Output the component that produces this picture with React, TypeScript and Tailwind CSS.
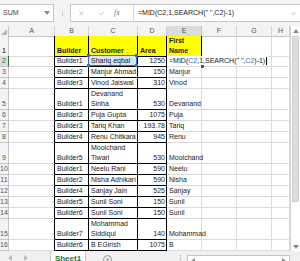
import { Check, ChevronDown, X } from "lucide-react";

type SheetRow = {
  n: number;
  tall?: boolean;
  b: string;
  c: string[];
  d: string;
  e: string;
};

const ROWS: SheetRow[] = [
  { n: 2, b: "Builder1", c: ["Shariq eqbal"], d: "1250", e: "" },
  { n: 3, b: "Builder2", c: ["Manjur Ahmad"], d: "150", e: "Manjur" },
  { n: 4, b: "Builder3", c: ["Vinod Jaiswal"], d: "310", e: "Vinod" },
  { n: 5, tall: true, b: "Builder1", c: ["Devanand", "Sinha"], d: "530", e: "Devanand" },
  { n: 6, b: "Builder2", c: ["Puja Gupta"], d: "1075", e: "Puja" },
  { n: 7, b: "Builder3", c: ["Tariq Khan"], d: "193.78", e: "Tariq" },
  { n: 8, b: "Builder4", c: ["Renu Chitkara"], d: "945", e: "Renu" },
  { n: 9, tall: true, b: "Builder5", c: ["Moolchand", "Tiwari"], d: "530", e: "Moolchand" },
  { n: 10, b: "Builder1", c: ["Neelu Rani"], d: "590", e: "Neelu" },
  { n: 11, b: "Builder2", c: ["Nisha Adhikari"], d: "590", e: "Nisha" },
  { n: 12, b: "Builder4", c: ["Sanjay Jain"], d: "525", e: "Sanjay" },
  { n: 13, b: "Builder5", c: ["Sunil Soni"], d: "150", e: "Sunil" },
  { n: 14, b: "Builder6", c: ["Sunil Soni"], d: "150", e: "Sunil" },
  { n: 15, tall: true, b: "Builder7", c: ["Mohammad", "Siddiqui"], d: "140", e: "Mohammad" },
  { n: 16, b: "Builder6", c: ["B EGirish"], d: "1075", e: "B" },
];

const COLS =
  "grid grid-cols-[9px_46px_34px_49px_29px_35px_35px_35px_18px]";
const LETTERS = ["A", "B", "C", "D", "E", "F", "G", "H"];

function Tri({ dir }: { readonly dir: "up" | "down" | "left" | "right" }) {
  const pts = {
    up: "0,4 3,0 6,4",
    down: "0,0 6,0 3,4",
    left: "4,0 4,6 0,3",
    right: "0,0 4,3 0,6",
  }[dir];
  const w = dir === "up" || dir === "down" ? 6 : 4;
  const h = dir === "up" || dir === "down" ? 4 : 6;
  return (
    <svg width={w} height={h} viewBox={`0 0 ${w} ${h}`}>
      <polygon points={pts} fill="#8a8a8a" />
    </svg>
  );
}

function FormulaBar() {
  return (
    <div className="h-[26px] bg-[#f3f3f3] flex items-start pt-[4px]">
      {/* Name box */}
      <div className="w-[54px] h-[18px] bg-white border border-l-0 border-[#c6c6c6] flex items-center justify-between pl-[3px] pr-[3px] text-[#444]">
        <span>SUM</span>
        <Tri dir="down" />
      </div>
      <div className="w-[16px] h-[18px] flex flex-col items-center justify-center gap-[1px]">
        <span className="w-[1px] h-[1px] bg-[#b0b0b0]" />
        <span className="w-[1px] h-[1px] bg-[#b0b0b0]" />
        <span className="w-[1px] h-[1px] bg-[#b0b0b0]" />
      </div>
      <div className="flex-1 h-[18px] bg-white border border-r-0 border-[#c6c6c6] flex items-center">
        <div className="w-[63px] h-full flex items-center border-r border-[#d6d6d6] text-[#7a7a7a]">
          <X size={7} strokeWidth={1.5} className="ml-[7px]" />
          <Check size={7} strokeWidth={1.5} className="ml-[13px]" />
          <span className="ml-[9px] font-['Liberation_Serif',serif] italic text-[8px]">
            fx
          </span>
        </div>
        <span className="ml-[4px] flex-1 whitespace-nowrap">
          =MID(C2,1,SEARCH(" ",C2)-1)
        </span>
        <ChevronDown size={7} strokeWidth={1.5} className="mr-[3px] text-[#666]" />
      </div>
    </div>
  );
}

function HeaderRow() {
  return (
    <div className={`${COLS} h-[10px]`}>
      <div className="bg-[#f3f3f3] border-r border-b border-[#c6c6c6] flex items-end justify-end pr-[1px] pb-[1px]">
        <svg width="6" height="6" viewBox="0 0 6 6">
          <polygon points="6,0 6,6 0,6" fill="#b7b7b7" />
        </svg>
      </div>
      {LETTERS.map((l) => {
        const boxed = l === "B" || l === "C" || l === "D";
        const active = l === "E";
        let cls =
          "bg-[#f3f3f3] text-[#555] border-r border-b border-r-[#d0d0d0] border-b-[#c6c6c6]";
        if (boxed)
          cls =
            "bg-[#f3f3f3] text-[#555] border-r border-b border-r-[#d0d0d0] border-b-black";
        if (active)
          cls =
            "bg-[#dcdcdc] text-[#1e6b41] border-r border-b border-r-[#c0c0c0] border-b-black";
        return (
          <div key={l} className={`${cls} flex items-center justify-center`}>
            {l}
          </div>
        );
      })}
    </div>
  );
}

function RowNum({ n, active = false }: { readonly n: number; readonly active?: boolean }) {
  return (
    <div
      className={
        active
          ? "bg-[#dcdcdc] text-[#1e6b41] border-r border-b border-r-[#217346] border-b-[#c6c6c6] flex items-end justify-center overflow-hidden"
          : "bg-[#f3f3f3] text-[#555] border-r border-b border-[#c6c6c6] flex items-end justify-center overflow-hidden"
      }
    >
      {n}
    </div>
  );
}

function TitleRow() {
  return (
    <div className={`${COLS} h-[20px] font-bold`}>
      <RowNum n={1} />
      <div className="border-r border-b border-r-black border-b-[#dadada]" />
      <div className="bg-[#ffff00] border-r border-b border-black flex items-end pl-[2px]">
        Builder
      </div>
      <div className="bg-[#ffff00] border-r border-b border-black flex items-end pl-[2px]">
        Customer
      </div>
      <div className="bg-[#ffff00] border-r border-b border-black flex items-end pl-[2px]">
        Area
      </div>
      <div className="bg-[#ffff00] border-r border-b border-black flex flex-col justify-end pl-[2px]">
        <span>First</span>
        <span>Name</span>
      </div>
      <div className="border-r border-b border-[#dadada]" />
      <div className="border-r border-b border-[#dadada]" />
      <div className="border-r border-b border-[#dadada]" />
    </div>
  );
}

function EditCell() {
  return (
    <div className="relative z-10 border-b border-[#dadada] flex items-end">
      <span className="whitespace-nowrap bg-white pl-[2px] pr-[1px] flex items-end">
        =MID(<span className="text-[#3a6fc4]">C2</span>,1,SEARCH(" ",
        <span className="text-[#3a6fc4]">C2</span>)-1)
        <span className="ml-[1px] mb-[1px] w-[1px] h-[8px] bg-black" />
      </span>
      <span className="absolute -right-[2px] -bottom-[2px] w-[3px] h-[3px] bg-[#217346]" />
    </div>
  );
}

function DataRow({ row }: { readonly row: SheetRow }) {
  const first = row.n === 2;
  return (
    <div className={`${COLS} ${row.tall ? "h-[21px]" : "h-[11px]"}`}>
      <RowNum n={row.n} active={first} />
      <div className="border-r border-b border-r-black border-b-[#dadada]" />
      <div className="border-r border-b border-black flex items-end pl-[2px] whitespace-nowrap overflow-hidden">
        {row.b}
      </div>
      <div
        className={`relative border-r border-b border-black flex flex-col justify-end pl-[2px] whitespace-nowrap ${first ? "bg-[#dce6f2]" : ""}`}
      >
        {row.c.map((t) => (
          <span key={t} className="overflow-hidden">
            {t}
          </span>
        ))}
        {first && (
          <>
            <span className="absolute -left-px -top-px right-0 bottom-0 border border-[#3a6fc4]" />
            <span className="absolute -left-[2px] -top-[2px] w-[3px] h-[3px] bg-[#3a6fc4]" />
            <span className="absolute -right-[1px] -top-[2px] w-[3px] h-[3px] bg-[#3a6fc4]" />
            <span className="absolute -left-[2px] -bottom-[1px] w-[3px] h-[3px] bg-[#3a6fc4]" />
            <span className="absolute -right-[1px] -bottom-[1px] w-[3px] h-[3px] bg-[#3a6fc4]" />
          </>
        )}
      </div>
      <div className="border-r border-b border-black flex items-end justify-end pr-[1px] whitespace-nowrap">
        {row.d}
      </div>
      {first ? (
        <EditCell />
      ) : (
        <div className="border-r border-b border-[#dadada] flex items-end pl-[2px] whitespace-nowrap">
          {row.e}
        </div>
      )}
      <div
        className={
          first ? "border-b border-[#dadada]" : "border-r border-b border-[#dadada]"
        }
      />
      <div className="border-r border-b border-[#dadada]" />
      <div className="border-r border-b border-[#dadada]" />
    </div>
  );
}

function VScroll() {
  return (
    <div className="w-[10px] h-[225px] flex flex-col border-l border-[#d0d0d0] bg-white">
      <div className="h-[10px] flex items-center justify-center">
        <Tri dir="up" />
      </div>
      <div className="h-[166px] mx-[1px] bg-[#dcdcdc] border border-[#cfcfcf]" />
      <div className="flex-1" />
      <div className="h-[9px] flex items-center justify-center">
        <Tri dir="down" />
      </div>
    </div>
  );
}

function TabBar() {
  return (
    <div className="h-[10px] flex items-start bg-[#f0f0f0] overflow-hidden">
      <div className="w-[50px] h-full flex items-start pt-[4px] opacity-50">
        <span className="ml-[8px]">
          <Tri dir="left" />
        </span>
        <span className="ml-[12px]">
          <Tri dir="right" />
        </span>
      </div>
      <div className="w-[36px] h-[14px] bg-white border-x border-[#c6c6c6] flex justify-center pt-[3px] text-[#217346] font-bold text-[8px] leading-[10px]">
        Sheet1
      </div>
      <div className="ml-[17px] mt-[4px] w-[9px] h-[9px] rounded-full border border-[#9a9a9a] flex items-center justify-center text-[#888] text-[8px] leading-none">
        +
      </div>
      <div className="ml-[68px] mt-[4px] flex flex-col gap-[1px]">
        <span className="w-[1px] h-[1px] bg-[#a0a0a0]" />
        <span className="w-[1px] h-[1px] bg-[#a0a0a0]" />
        <span className="w-[1px] h-[1px] bg-[#a0a0a0]" />
      </div>
      <div className="ml-[6px] mt-[4px] w-[103px] h-[10px] bg-white border border-[#c6c6c6] flex items-start justify-between px-[3px] pt-[2px]">
        <Tri dir="left" />
        <Tri dir="right" />
      </div>
    </div>
  );
}

export default function App() {
  return (
    <div className="w-[300px] h-[261px] overflow-hidden bg-white font-['Liberation_Sans',Arial,sans-serif] text-[7px] leading-[10px] text-[#1a1a1a]">
      <FormulaBar />
      <div className="flex">
        <div className="w-[290px] overflow-hidden">
          <HeaderRow />
          <TitleRow />
          {ROWS.map((r) => (
            <DataRow key={r.n} row={r} />
          ))}
        </div>
        <VScroll />
      </div>
      <TabBar />
    </div>
  );
}
